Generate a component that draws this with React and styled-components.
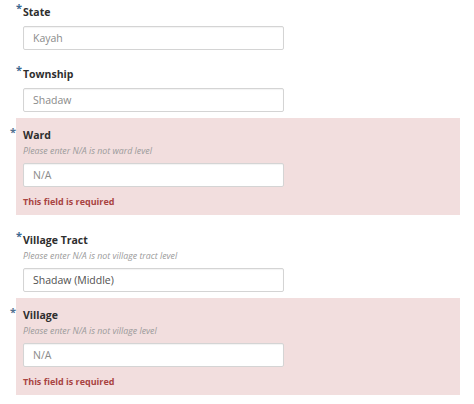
import styled, { createGlobalStyle } from "styled-components";

const GlobalStyle = createGlobalStyle`
  body {
    margin: 0;
    background: #ffffff;
    font-family: "Open Sans", "Noto Sans", sans-serif;
  }
`;

const FIELDS = [
  { name: "State", value: "Kayah", placeholder: true },
  { name: "Township", value: "Shadaw", placeholder: true },
  {
    name: "Ward",
    help: "Please enter N/A is not ward level",
    value: "N/A",
    placeholder: true,
    error: "This field is required",
  },
  {
    name: "Village Tract",
    help: "Please enter N/A is not village tract level",
    value: "Shadaw (Middle)",
  },
  {
    name: "Village",
    help: "Please enter N/A is not village level",
    value: "N/A",
    placeholder: true,
    error: "This field is required",
  },
];

const StyledForm = styled.div`
  width: 444px;
  margin: -5px 0 0 16px;
  display: flex;
  flex-direction: column;
`;

const StyledField = styled.div`
  position: relative;
  padding: ${({ $error }) => ($error ? "8px 7px 6px" : "8px 7px 7px")};
  margin-top: ${({ $error }) => ($error ? "-1px" : "0")};
  margin-bottom: ${({ $error }) => ($error ? "8px" : "0")};
  background-color: ${({ $error }) => ($error ? "#f2dede" : "transparent")};
  display: flex;
  flex-direction: column;
  align-items: flex-start;
`;

const StyledRequired = styled.span`
  position: absolute;
  left: ${({ $error }) => ($error ? "-6px" : "0")};
  top: ${({ $error }) => ($error ? "8px" : "7px")};
  font-size: 11px;
  line-height: 11px;
  font-weight: 700;
  color: ${({ $error }) => ($error ? "#51708f" : "#3c6890")};
`;

const StyledLabel = styled.label`
  margin: 0;
  font-size: 10.5px;
  line-height: 18px;
  font-weight: 700;
  color: #2e2e2e;
`;

const StyledHelp = styled.p`
  margin: 0;
  font-size: 8.8px;
  line-height: 14px;
  font-style: italic;
  color: #9a9a9a;
`;

const StyledInput = styled.div`
  box-sizing: border-box;
  width: 261px;
  height: 24px;
  margin-top: 5px;
  padding: 0 9px;
  display: flex;
  align-items: center;
  background-color: #ffffff;
  border: 1px solid #d4d4d4;
  border-radius: 2px;
  box-shadow: inset 0 1px 1px rgba(0, 0, 0, 0.05);
  font-size: 10.5px;
  color: ${({ $placeholder }) => ($placeholder ? "#8a8a8a" : "#505050")};
`;

const StyledError = styled.p`
  margin: 8px 0 0;
  font-size: 9px;
  line-height: 14px;
  font-weight: 700;
  color: #a94442;
`;

const Field = ({ field }) => {
  const hasError = Boolean(field.error);
  return (
    <StyledField $error={hasError}>
      <StyledRequired $error={hasError}>*</StyledRequired>
      <StyledLabel>{field.name}</StyledLabel>
      {field.help && <StyledHelp>{field.help}</StyledHelp>}
      <StyledInput $placeholder={field.placeholder}>{field.value}</StyledInput>
      {hasError && <StyledError>{field.error}</StyledError>}
    </StyledField>
  );
};

export default function App() {
  return (
    <>
      <GlobalStyle />
      <StyledForm>
        {FIELDS.map((field) => (
          <Field key={field.name} field={field} />
        ))}
      </StyledForm>
    </>
  );
}
